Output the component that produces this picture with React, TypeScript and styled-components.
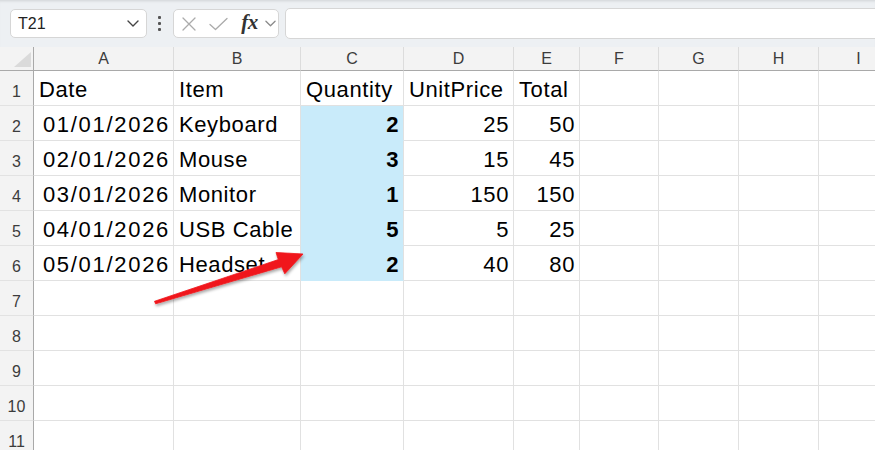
import styled, { createGlobalStyle } from 'styled-components';

const GlobalStyle = createGlobalStyle`
  html, body {
    margin: 0;
    padding: 0;
    background: #ffffff;
    overflow: hidden;
  }
  body {
    font-family: "Liberation Sans", Arial, sans-serif;
  }
`;

const COLS = [
  { key: 'A', w: 140 },
  { key: 'B', w: 127 },
  { key: 'C', w: 103 },
  { key: 'D', w: 110 },
  { key: 'E', w: 66 },
  { key: 'F', w: 79 },
  { key: 'G', w: 80 },
  { key: 'H', w: 80 },
  { key: 'I', w: 80 },
];

type Val = string | number;

const DATA: Val[][] = [
  ['Date', 'Item', 'Quantity', 'UnitPrice', 'Total'],
  ['01/01/2026', 'Keyboard', 2, 25, 50],
  ['02/01/2026', 'Mouse', 3, 15, 45],
  ['03/01/2026', 'Monitor', 1, 150, 150],
  ['04/01/2026', 'USB Cable', 5, 5, 25],
  ['05/01/2026', 'Headset', 2, 40, 80],
];

const ROW_COUNT = 11;
const FILL = '#c9ebfa';

const Page = styled.div`
  position: relative;
  width: 875px;
  height: 450px;
  overflow: hidden;
  background: #fff;
`;

const Toolbar = styled.div`
  height: 47px;
  display: flex;
  align-items: center;
  padding-left: 10px;
  background: #edf0f3;
  box-shadow: inset 0 3px 3px -2px rgba(0, 0, 0, 0.12);
  box-sizing: border-box;
`;

const NameBox = styled.div`
  width: 137px;
  height: 29px;
  box-sizing: border-box;
  display: flex;
  align-items: center;
  justify-content: space-between;
  padding: 0 7px 0 7px;
  background: #fff;
  border: 1px solid #d6d6d6;
  border-radius: 5px;
  font-size: 16px;
  color: #222;
`;

const Dots = styled.div`
  display: flex;
  flex-direction: column;
  gap: 3px;
  margin: 0 12px 0 11px;
  span {
    width: 3px;
    height: 3px;
    background: #555;
    border-radius: 1px;
  }
`;

const FxGroup = styled.div`
  width: 106px;
  height: 29px;
  box-sizing: border-box;
  display: flex;
  align-items: center;
  padding-left: 8px;
  background: #fff;
  border: 1px solid #d6d6d6;
  border-radius: 5px;
  flex-shrink: 0;
`;

const IconSlot = styled.div<{ $w: number; $end?: boolean }>`
  width: ${(p) => p.$w}px;
  flex-shrink: 0;
  height: 27px;
  display: flex;
  align-items: center;
  justify-content: ${(p) => (p.$end ? 'flex-end' : 'center')};
`;

const Fx = styled.span`
  font-family: "Liberation Serif", "Times New Roman", serif;
  font-style: italic;
  font-weight: bold;
  font-size: 21px;
  color: #333;
  letter-spacing: -0.5px;
  margin-top: -2px;
`;

const FormulaInput = styled.div`
  flex: 1;
  height: 29px;
  margin-left: 6px;
  margin-right: -12px;
  background: #fff;
  border: 1px solid #d6d6d6;
  border-radius: 5px;
`;

const Sheet = styled.div`
  display: grid;
  grid-template-columns: 34px ${COLS.map((c) => c.w + 'px').join(' ')};
  grid-template-rows: 24px repeat(${ROW_COUNT}, 35px);
`;

const Corner = styled.div`
  position: relative;
  background: #f3f3f3;
  border-right: 1px solid #a9a9a9;
  border-bottom: 1px solid #a9a9a9;
  box-sizing: border-box;
  svg {
    position: absolute;
    right: 2px;
    bottom: 3px;
  }
`;

const ColHead = styled.div`
  background: #f3f3f3;
  border-right: 1px solid #dcdcdc;
  border-bottom: 1px solid #a9a9a9;
  box-sizing: border-box;
  display: flex;
  align-items: center;
  justify-content: center;
  font-size: 16px;
  color: #3c3c3c;
  padding-top: 1px;
`;

const RowHead = styled.div`
  background: #f3f3f3;
  border-right: 1px solid #a9a9a9;
  border-bottom: 1px solid #e2e2e2;
  box-sizing: border-box;
  text-align: center;
  font-size: 16px;
  color: #3c3c3c;
  line-height: 35px;
  padding-top: 3px;
`;

const Cell = styled.div<{ $right?: boolean; $bold?: boolean; $fill?: string; $date?: boolean }>`
  border-right: 1px solid #e1e1e1;
  border-bottom: 1px solid ${(p) => p.$fill || '#e1e1e1'};
  background: ${(p) => p.$fill || '#fff'};
  box-sizing: border-box;
  padding: 2px ${(p) => (p.$date ? 3 : 4)}px 0 5px;
  line-height: 33px;
  font-size: 22px;
  letter-spacing: ${(p) => (p.$date ? 1.7 : 0.6)}px;
  font-weight: ${(p) => (p.$bold ? 'bold' : 'normal')};
  text-align: ${(p) => (p.$right ? 'right' : 'left')};
  color: #000;
  white-space: nowrap;
  overflow: visible;
`;

const Overlay = styled.svg`
  position: absolute;
  left: 0;
  top: 0;
  pointer-events: none;
`;

function Chevron({ color = '#444', w = 12 }: { color?: string; w?: number }) {
  return (
    <svg width={w} height="7" viewBox="0 0 12 7">
      <path d="M1 1 L6 6 L11 1" fill="none" stroke={color} strokeWidth="1.4" strokeLinecap="round" strokeLinejoin="round" />
    </svg>
  );
}

function Formula() {
  return (
    <Toolbar>
      <NameBox>
        <span>T21</span>
        <Chevron />
      </NameBox>
      <Dots>
        <span />
        <span />
        <span />
      </Dots>
      <FxGroup>
        <IconSlot $w={14}>
          <svg width="14" height="14" viewBox="0 0 14 14">
            <path d="M1 1 L13 13 M13 1 L1 13" stroke="#ababab" strokeWidth="1.3" strokeLinecap="round" />
          </svg>
        </IconSlot>
        <IconSlot $w={44}>
          <svg width="19" height="14" viewBox="0 0 19 14">
            <path d="M1 7.5 L6.5 12.5 L18 1.5" fill="none" stroke="#ababab" strokeWidth="1.3" strokeLinecap="round" strokeLinejoin="round" />
          </svg>
        </IconSlot>
        <IconSlot $w={19}>
          <Fx>fx</Fx>
        </IconSlot>
        <IconSlot $w={17} $end>
          <Chevron color="#8a8a8a" w={11} />
        </IconSlot>
      </FxGroup>
      <FormulaInput />
    </Toolbar>
  );
}

export default function App() {
  const rows = Array.from({ length: ROW_COUNT }, (_, i) => i);
  return (
    <Page>
      <GlobalStyle />
      <Formula />
      <Sheet>
        <Corner>
          <svg width="17" height="15" viewBox="0 0 17 15">
            <polygon points="17,0 17,15 0,15" fill="#dadada" />
          </svg>
        </Corner>
        {COLS.map((c) => (
          <ColHead key={c.key}>{c.key}</ColHead>
        ))}
        {rows.map((r) => (
          <>
            <RowHead key={'h' + r}>{r + 1}</RowHead>
            {COLS.map((c, ci) => {
              const v = DATA[r] ? DATA[r][ci] : undefined;
              const header = r === 0;
              const isNum = typeof v === 'number';
              const isDate = !header && ci === 0 && v !== undefined;
              const qty = !header && ci === 2 && r < DATA.length;
              return (
                <Cell
                  key={c.key + r}
                  $right={isNum || isDate}
                  $date={isDate}
                  $bold={qty}
                  $fill={qty ? FILL : undefined}
                >
                  {v ?? ''}
                </Cell>
              );
            })}
          </>
        ))}
      </Sheet>
      <Overlay width="875" height="450" viewBox="0 0 875 450">
        <defs>
          <filter id="shadow" x="-10%" y="-30%" width="130%" height="180%">
            <feDropShadow dx="1" dy="2" stdDeviation="1.6" floodColor="#000" floodOpacity="0.35" />
          </filter>
        </defs>
        <polygon
          points="154.5,301.3 278.3,259.6 276,252.5 303,254 284.8,273.8 281.6,266.8 155.6,303.8"
          fill="#f0161c"
          stroke="#f0161c"
          strokeWidth="0.8"
          strokeLinejoin="round"
          filter="url(#shadow)"
        />
      </Overlay>
    </Page>
  );
}
